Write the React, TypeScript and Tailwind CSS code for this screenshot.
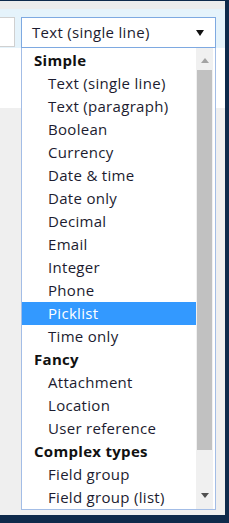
const groups: { title: string; items: string[] }[] = [
  {
    title: 'Simple',
    items: [
      'Text (single line)',
      'Text (paragraph)',
      'Boolean',
      'Currency',
      'Date & time',
      'Date only',
      'Decimal',
      'Email',
      'Integer',
      'Phone',
      'Picklist',
      'Time only',
    ],
  },
  { title: 'Fancy', items: ['Attachment', 'Location', 'User reference'] },
  { title: 'Complex types', items: ['Field group', 'Field group (list)'] },
];

const selected = 'Picklist';

export default function App() {
  return (
    <div
      className="w-[229px] h-[523px] bg-[#0e2a4b] pt-px pr-[4px] pb-[8px] overflow-hidden"
      style={{ fontFamily: '"Open Sans", "Noto Sans", sans-serif' }}
    >
      <div className="relative h-full bg-[#f0f0f0] flex flex-col">
        <div className="h-[8px] bg-[#ececec]" />
        {/* header strip */}
        <div className="h-[39px] bg-[#e5f3fb] flex items-start pt-[8px] gap-[6px]">
          <div className="w-[15px] h-[30px] bg-white border border-[#d0d0d0] border-l-0" />
          <div className="w-[195px] h-[31px] bg-white border border-[#7ea9e1] flex items-center justify-between pl-[10px] pr-[11px]">
            <span className="text-[15px] tracking-[0.3px] text-[#1c1c30] leading-none">Text (single line)</span>
            <svg width="8" height="6" viewBox="0 0 8 6">
              <path d="M0 0H8L4 6Z" fill="#111" />
            </svg>
          </div>
        </div>
        <div className="h-[60px] bg-white" />
        <div className="flex-1 bg-[#efefef]" />

        {/* dropdown menu */}
        <div className="absolute left-[21px] top-[47px] w-[195px] h-[462px] bg-white border border-[#a3bde6] border-t-0 flex overflow-hidden">
          <div className="flex-1 pt-px">
            {groups.map((g) => (
              <div key={g.title}>
                <div className="h-[23px] flex items-center pl-[12px] text-[15px] tracking-[0.3px] font-bold text-[#111]">
                  {g.title}
                </div>
                {g.items.map((it) => (
                  <div
                    key={it}
                    className={
                      it === selected
                        ? 'h-[23px] flex items-center pl-[26px] text-[15px] tracking-[0.3px] bg-[#3399ff] text-white'
                        : 'h-[23px] flex items-center pl-[26px] text-[15px] tracking-[0.3px] text-[#1c1c30]'
                    }
                  >
                    {it}
                  </div>
                ))}
              </div>
            ))}
          </div>
          {/* scrollbar */}
          <div className="w-[17px] mr-[2px] bg-[#f0f0f0] flex flex-col items-center">
            <div className="h-[22px] flex items-center justify-center pt-[2px]">
              <svg width="8" height="5" viewBox="0 0 8 5">
                <path d="M0 5H8L4 0Z" fill="#a3a3a3" />
              </svg>
            </div>
            <div className="w-[15px] h-[380px] bg-[#c1c1c1]" />
            <div className="flex-1 flex items-end justify-center pb-[11px]">
              <svg width="8" height="5" viewBox="0 0 8 5">
                <path d="M0 0H8L4 5Z" fill="#505050" />
              </svg>
            </div>
          </div>
        </div>
      </div>
    </div>
  );
}
